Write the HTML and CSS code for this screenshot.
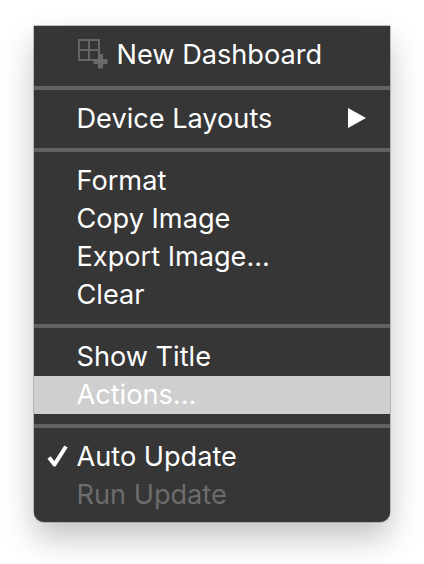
FILE: index.html
```html
<!DOCTYPE html>
<html lang="en">
<head>
<meta charset="utf-8">
<title>Menu</title>
<link rel="stylesheet" href="styles.css">
</head>
<body>
<div class="menu">
  <div class="row first">
    <svg class="dash-icon" width="30" height="30" viewBox="0 0 30 30" aria-hidden="true">
      <path class="grid" d="M1 1H21V21H1ZM11 1V21M1 11H21"/>
      <path class="plus" d="M20 15H25V20H29.500V25H25V29.500H20V25H15.500V20H20Z"/>
    </svg>
    <span class="label indented">New Dashboard</span>
  </div>
  <div class="sep sep-a"></div>
  <div class="row"><span class="label">Device Layouts</span><span class="arrow"></span></div>
  <div class="sep sep-b"></div>
  <div class="row"><span class="label">Format</span></div>
  <div class="row"><span class="label">Copy Image</span></div>
  <div class="row"><span class="label">Export Image...</span></div>
  <div class="row"><span class="label">Clear</span></div>
  <div class="sep sep-b"></div>
  <div class="row"><span class="label">Show Title</span></div>
  <div class="row active"><span class="label">Actions...</span></div>
  <div class="sep sep-c"></div>
  <div class="row">
    <svg class="check" width="24" height="24" viewBox="0 0 24 24" aria-hidden="true">
      <path d="M3 13.500L8.500 20.500L20 2.500"/>
    </svg>
    <span class="label">Auto Update</span>
  </div>
  <div class="row disabled"><span class="label">Run Update</span></div>
</div>
</body>
</html>
```
FILE: styles.css
```css
html, body {
  margin: 0;
  padding: 0;
  background: #fff;
}
body {
  width: 424px;
  height: 564px;
  overflow: hidden;
  padding-top: 26px;
  box-sizing: border-box;
  font-family: Inter, "Liberation Sans", sans-serif;
}
.menu {
  width: 356.500px;
  height: 496px;
  margin-left: 33.500px;
  box-sizing: border-box;
  padding: 9px 0;
  background: #363636;
  border-radius: 0 0 10px 10px;
  box-shadow: 0 0 0 0.5px #8a8a8a, 0 16px 32px rgba(0, 0, 0, 0.24);
  display: flex;
  flex-direction: column;
}
.row {
  position: relative;
  height: 38px;
  flex: none;
  box-sizing: border-box;
  display: flex;
  align-items: center;
  padding-left: 43px;
  color: #fff;
  font-size: 27.150px;
}
.label {
  white-space: nowrap;
}
.indented {
  margin-left: 40px;
}
.dash-icon {
  position: absolute;
  left: 44.500px;
  top: 4px;
}
.grid {
  fill: none;
  stroke: #666;
  stroke-width: 2;
}
.plus {
  fill: #6a6a6a;
}
.sep {
  flex: none;
  height: 4px;
  background: #626262;
}
.sep-a { margin: 13px 0 9px; }
.sep-b { margin: 11px 0 9px; }
.sep-c { margin: 10px 0 9px; }
.arrow {
  position: absolute;
  left: 314.500px;
  top: 9px;
  width: 0;
  height: 0;
  border-left: 18px solid #fff;
  border-top: 10px solid transparent;
  border-bottom: 10px solid transparent;
}
.active {
  margin-top: 1px;
  padding-bottom: 2px;
  background: #cfcfcf;
}
.disabled {
  color: #6c6c6c;
}
.check {
  position: absolute;
  left: 12px;
  top: 7px;
}
.check path {
  fill: none;
  stroke: #fff;
  stroke-width: 4;
  stroke-linejoin: round;
}
```
